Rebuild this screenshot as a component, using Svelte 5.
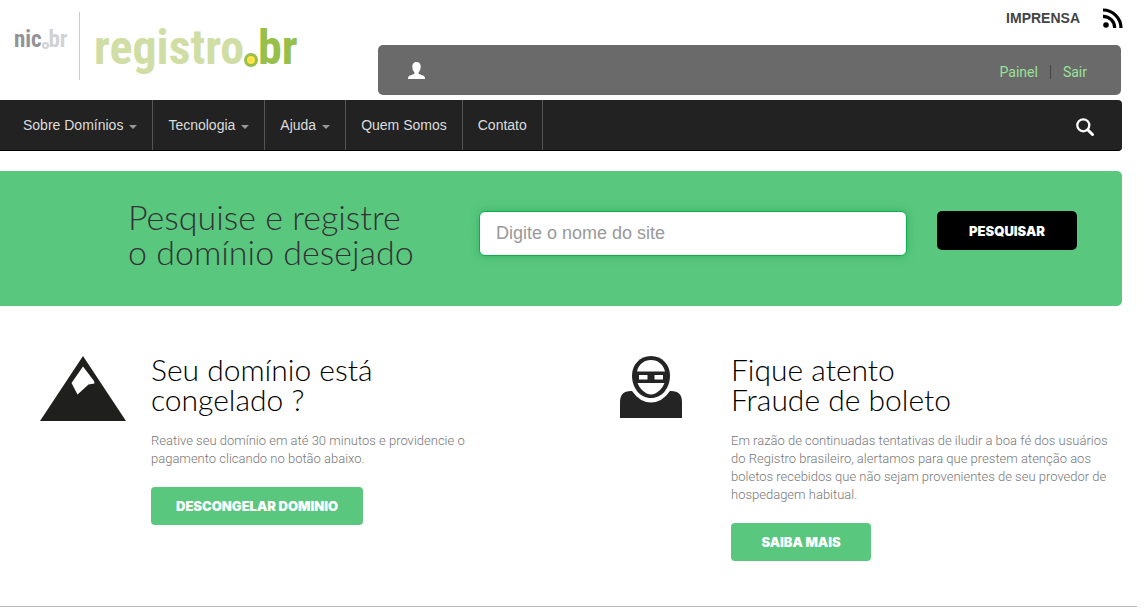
<script>
  const menu = [
    { label: 'Sobre Domínios', dropdown: true },
    { label: 'Tecnologia', dropdown: true },
    { label: 'Ajuda', dropdown: true },
    { label: 'Quem Somos', dropdown: false },
    { label: 'Contato', dropdown: false }
  ];
  let domain = $state('');
</script>

<div class="page">
  <header class="top">
    <div class="logos">
      <a class="nic" href="#nic">nic<span class="tld">.br<i class="dot"></i></span></a>
      <a class="registro" href="#inicio">registro<span class="tld">.br<i class="dot"></i></span></a>
    </div>
    <div class="side">
      <div class="press">
        <a href="#imprensa">IMPRENSA</a>
        <a class="rss" href="#rss" aria-label="RSS">
          <svg viewBox="0 0 20 20" width="20" height="20">
            <circle cx="3" cy="17" r="2.8" />
            <path d="M0 8.3A11.7 11.7 0 0 1 11.700 20M0 2A18 18 0 0 1 18 20" fill="none" stroke="#000" stroke-width="3.2" />
          </svg>
        </a>
      </div>
      <div class="userbar">
        <svg viewBox="0 0 17 17" width="17" height="17" aria-hidden="true">
          <path d="M8.500 0C11.200 0 12.700 1.700 12.700 4.600C12.700 7.300 11.800 9.300 10.600 10.300V11.600C11.200 12.800 15.300 13.200 16.400 14.500Q17 15.200 17 17H0Q0 15.200.6 14.500C1.700 13.200 5.800 12.800 6.400 11.600V10.300C5.200 9.300 4.300 7.300 4.300 4.600C4.300 1.700 5.800 0 8.500 0Z" fill="#fff" />
        </svg>
        <div class="account">
          <a href="#painel">Painel</a>
          <span class="bar"></span>
          <a href="#sair">Sair</a>
        </div>
      </div>
    </div>
  </header>

  <nav class="menu">
    {#each menu as item}
      <a href="#menu">{item.label}{#if item.dropdown}<i class="caret"></i>{/if}</a>
    {/each}
    <button class="find" aria-label="Buscar">
      <svg viewBox="0 0 18 18" width="18" height="18">
        <circle cx="7.300" cy="7.300" r="6" fill="none" stroke="#fff" stroke-width="2.300" />
        <path d="M11.700 11.700L16.500 16.500" stroke="#fff" stroke-width="3" stroke-linecap="round" />
      </svg>
    </button>
  </nav>

  <form class="hero" onsubmit={(e) => e.preventDefault()}>
    <h1><label for="domain">Pesquise e registre<br />o domínio desejado</label></h1>
    <input id="domain" type="text" placeholder="Digite o nome do site" bind:value={domain} />
    <button class="btn dark">PESQUISAR</button>
  </form>

  <main class="features">
    <section>
      <div class="icon">
        <svg viewBox="0 0 86 66" width="86" height="66" aria-hidden="true">
          <path d="M43 0L86 65H0ZM43 10.500L31.500 27L37.500 38.500L48.500 28.500L54.500 27.500L54 25Z" fill="#1f1f1e" fill-rule="evenodd" />
        </svg>
      </div>
      <div class="copy">
        <h2>Seu domínio está<br />congelado ?</h2>
        <p>Reative seu domínio em até 30 minutos e providencie o<br />pagamento clicando no botão abaixo.</p>
        <a class="btn" href="#descongelar">DESCONGELAR DOMINIO</a>
      </div>
    </section>
    <section>
      <div class="icon">
        <svg viewBox="0 0 62 62" width="62" height="62" aria-hidden="true">
          <path d="M0 62V46Q0 35 11 35H12Q20 46.500 31 46.500Q42 46.500 50 35H51Q62 35 62 46V62Z" fill="#242424" />
          <path d="M31 0C42 0 50 8.500 50 19.500C50 32 42 42 31 42C20 42 12 32 12 19.500C12 8.500 20 0 31 0Z" fill="#242424" />
          <path d="M17 15.500C18.500 8.500 24 4 31 4C38 4 43.500 8.500 45 15.500ZM17.500 27H44.500Q43 31 40 34Q35 38.500 31 38.500Q27 38.500 22 34Q19 31 17.500 27Z" fill="#fff" />
          <path d="M19 19h8.500v4.500H19ZM34.500 19H43v4.500h-8.500Z" fill="#fff" />
        </svg>
      </div>
      <div class="copy">
        <h2>Fique atento<br />Fraude de boleto</h2>
        <p>Em razão de continuadas tentativas de iludir a boa fé dos usuários<br />do Registro brasileiro, alertamos para que prestem atenção aos<br />boletos recebidos que não sejam provenientes de seu provedor de<br />hospedagem habitual.</p>
        <a class="btn" href="#saiba-mais">SAIBA MAIS</a>
      </div>
    </section>
  </main>
  <hr />
</div>

<style>
  :global(body) { margin: 0; background: #fff; }
  .page { font: 14px/20px "Liberation Sans", Arial, sans-serif; color: #333; }
  a { color: inherit; text-decoration: none; }
  button { border: 0; padding: 0; font: inherit; cursor: pointer; }
  svg { display: block; }

  .top { display: flex; height: 100px; margin-right: 25px; }
  .logos { display: flex; width: 378px; flex: none; box-sizing: border-box; padding: 12px 0 20px 14px; }
  .nic, .registro { font-family: "Roboto Condensed", "Liberation Sans Narrow", "DejaVu Sans Condensed", sans-serif; font-weight: 700; white-space: nowrap; }
  .nic { width: 65px; border-right: 1px solid #ccc; font-size: 23px; line-height: 56px; color: #929396; }
  .registro { padding-left: 14px; font-size: 48px; line-height: 72px; color: #d0dea5; }
  .tld { position: relative; color: #97bf4a; }
  .nic .tld { color: #d0d1d3; }
  /* Ring drawn over the dot of ".br" */
  .dot { position: absolute; left: 0; bottom: 9px; width: 8px; height: 8px; border: 3px solid #97bf4a; border-radius: 50%; background: #ffe34d; }
  .nic .dot { bottom: 4px; width: 3px; height: 3px; border: 2px solid #d0d1d3; background: #fff; }

  .side { flex: 1; }
  .press { display: flex; height: 45px; box-sizing: border-box; padding-top: 8px; justify-content: flex-end; gap: 23px; font-weight: 700; color: #444; }
  .rss { margin-right: -1px; }
  .userbar { display: flex; align-items: center; justify-content: space-between; height: 50px; margin-right: 1px; box-sizing: border-box; padding: 0 34px 0 30px; border-radius: 5px; background: #6a6a6a; }
  .account { display: flex; align-items: center; padding-top: 4px; font-family: Roboto, sans-serif; color: #99e29b; }
  .bar { width: 1px; height: 14px; margin: 0 12px; background: #444; }

  .menu { display: flex; height: 50px; margin-right: 25px; padding-left: 8px; background: #222; border-bottom: 1px solid #000; border-radius: 0 4px 4px 0; }
  .menu a { display: flex; align-items: center; padding: 0 15px; border-right: 1px solid #555; color: #ddd; }
  .caret { margin: 3px 0 0 6px; border: 4px solid transparent; border-top-color: #999; border-bottom: 0; }
  .find { margin: 4px 28px 0 auto; background: none; }

  .hero { display: flex; align-items: flex-start; margin: 20px 25px 0 0; padding: 40px 45px 0 128px; height: 95px; background: #5ac77f; border-radius: 0 5px 5px 0; }
  h1, h2 { margin: 0; font-family: Lato, sans-serif; font-weight: 300; }
  h1 { width: 351px; flex: none; margin-top: -12px; font-size: 34px; line-height: 35px; }
  input { flex: 1; min-width: 0; height: 45px; box-sizing: border-box; padding: 0 16px; border: 1px solid #0cb04a; border-radius: 6px; background: #fff; box-shadow: 0 0 8px rgba(12, 160, 70, 0.5); font: 18px "Liberation Sans", Arial, sans-serif; color: #333; }
  input::placeholder { color: #999; opacity: 1; }
  .btn { display: inline-block; box-sizing: border-box; min-width: 140px; padding: 0 25px; border-radius: 4px; background: #5ac77f; color: #fff; font: 900 13px/38px Inter, sans-serif; text-align: center; white-space: nowrap; }
  .dark { height: 39px; margin-left: 30px; background: #000; border-radius: 5px; }

  .features { display: grid; grid-template-columns: 1fr 1fr; gap: 53px; padding: 50px 0 45px 40px; }
  section { display: flex; }
  .icon { width: 111px; flex: none; }
  h2 { margin-top: -2px; color: #000; font-size: 30px; line-height: 30px; }
  p { margin: 18px 0 19px; font: 300 13px/18px Roboto, sans-serif; color: #777; white-space: nowrap; }
  hr { margin: 0 10px 0 0; border: 0; border-top: 1px solid #bbb; }
</style>
